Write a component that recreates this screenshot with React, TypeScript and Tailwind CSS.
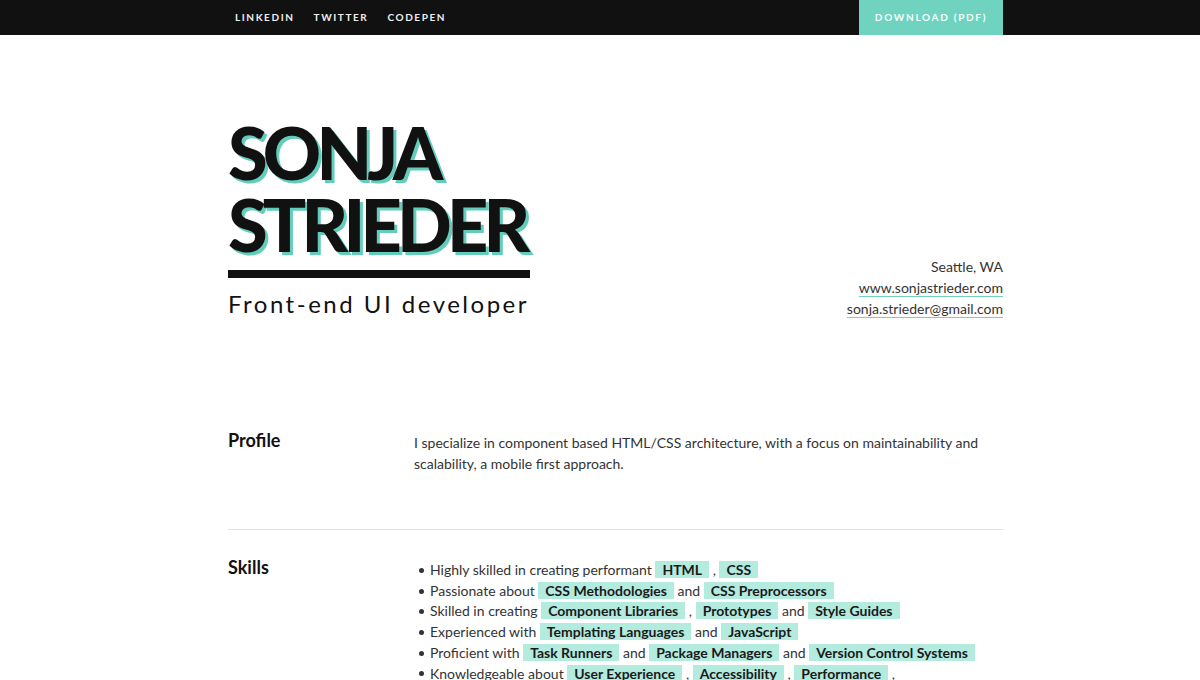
import React from "react";

const Tag = ({ children }: { children: React.ReactNode }) => (
  <span className="bg-[#b4ebdf] px-[7px] font-bold text-[#1a1a1a] whitespace-nowrap">{children}</span>
);

const skills: React.ReactNode[] = [
  <>Highly skilled in creating performant <Tag>HTML</Tag> , <Tag>CSS</Tag></>,
  <>Passionate about <Tag>CSS Methodologies</Tag> and <Tag>CSS Preprocessors</Tag></>,
  <>Skilled in creating <Tag>Component Libraries</Tag> , <Tag>Prototypes</Tag> and <Tag>Style Guides</Tag></>,
  <>Experienced with <Tag>Templating Languages</Tag> and <Tag>JavaScript</Tag></>,
  <>Proficient with <Tag>Task Runners</Tag> and <Tag>Package Managers</Tag> and <Tag>Version Control Systems</Tag></>,
  <>Knowledgeable about <Tag>User Experience</Tag> , <Tag>Accessibility</Tag> , <Tag>Performance</Tag> , <Tag>Search Engine Optimization</Tag></>,
];

export default function App() {
  return (
    <div className="min-h-screen bg-white text-[#333] font-['Lato','Liberation_Sans',sans-serif]">
      {/* Top nav */}
      <nav className="bg-[#111111] h-[35px]">
        <div className="ml-[228px] w-[775px] h-full flex items-center justify-between">
          <div className="flex items-center gap-[19px] pl-[7px] text-[10px] font-bold tracking-[1.6px] text-[#eeeeee]">
            <a href="#">LINKEDIN</a>
            <a href="#">TWITTER</a>
            <a href="#">CODEPEN</a>
          </div>
          <a
            href="#"
            className="h-full w-[144px] bg-[#6fd3c0] flex items-center justify-center text-[10px] font-bold tracking-[1.7px] text-[#f4fffc]"
          >
            DOWNLOAD (PDF)
          </a>
        </div>
      </nav>

      <main className="ml-[228px] w-[775px]">
        {/* Header */}
        <header className="pt-[81px] flex items-end justify-between">
          <div>
            <h1 className="text-[72px] leading-none font-black text-[#111] tracking-[-4.8px] [text-shadow:3px_3px_0_#62cdbb]">
              SONJA
              <br />
              STRIEDER
            </h1>
            <div className="mt-[10px] h-[8px] w-[302px] bg-[#111]" />
            <p className="mt-[11px] text-[24px] leading-[30px] tracking-[2.5px] text-[#111]">
              Front-end UI developer
            </p>
          </div>
          <div className="text-right text-[14px] leading-[21px] text-[#333]">
            <div>Seattle, WA</div>
            <div>
              <a href="#" className="underline decoration-[#6fd3c0] underline-offset-[3px]">
                www.sonjastrieder.com
              </a>
            </div>
            <div>
              <a href="#" className="underline decoration-[#6fd3c0] underline-offset-[3px]">
                sonja.strieder@gmail.com
              </a>
            </div>
          </div>
        </header>

        {/* Profile */}
        <section className="mt-[112px] flex pb-[55px] border-b border-[#e2e2e2]">
          <h2 className="w-[186px] shrink-0 text-[18px] font-bold text-[#111] leading-[24px] -mt-[3px]">Profile</h2>
          <p className="flex-1 text-[14px] leading-[21px] pt-[1px]">
            I specialize in component based HTML/CSS architecture, with a focus on maintainability and
            scalability, a mobile first approach.
          </p>
        </section>

        {/* Skills */}
        <section className="pt-[28px] flex">
          <h2 className="w-[186px] shrink-0 text-[18px] font-bold text-[#111] leading-[24px] -mt-[3px]">Skills</h2>
          <ul className="flex-1 text-[14px] leading-[20.7px] pt-[2px]">
            {skills.map((s, i) => (
              <li key={i} className="flex">
                <span className="w-[16px] shrink-0 flex items-center pl-[5px] h-[20.7px]">
                  <span className="block w-[5px] h-[5px] rounded-full bg-[#333]" />
                </span>
                <span>{s}</span>
              </li>
            ))}
          </ul>
        </section>
      </main>
    </div>
  );
}
